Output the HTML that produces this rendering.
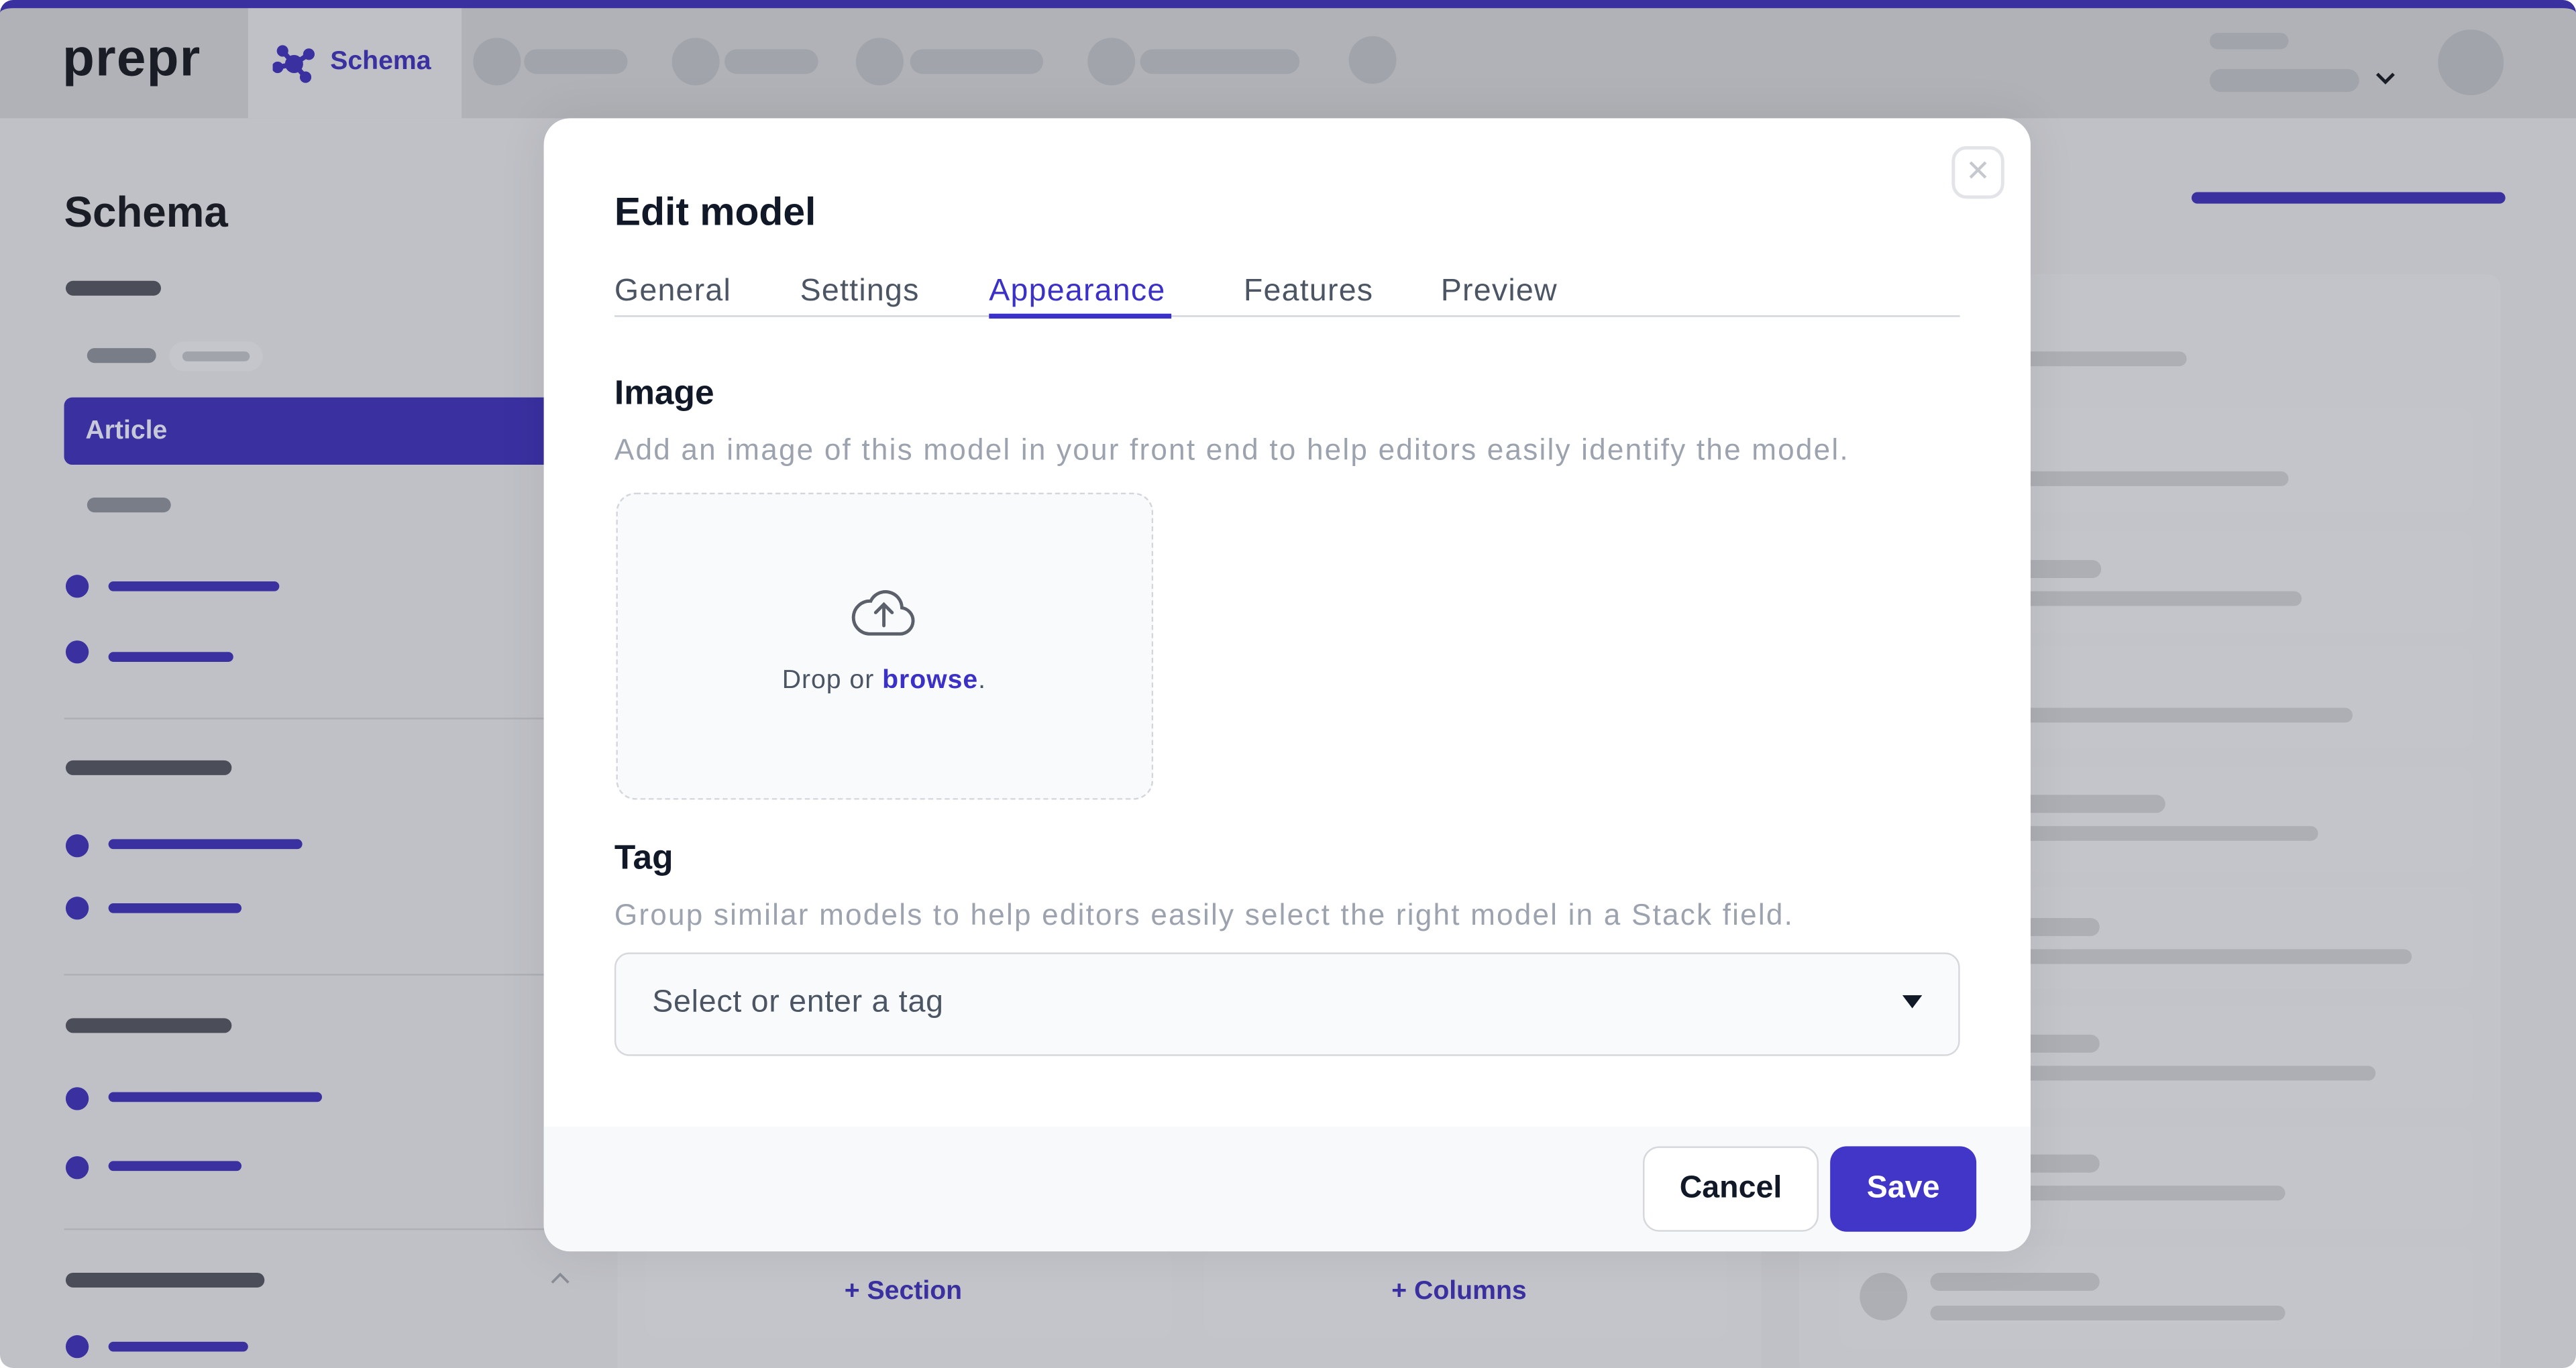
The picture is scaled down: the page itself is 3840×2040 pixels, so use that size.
<!DOCTYPE html>
<html><head><meta charset="utf-8"><style>
*{margin:0;padding:0;box-sizing:border-box}
html,body{width:3840px;height:2040px;overflow:hidden;background:#fff}
#w{position:absolute;left:0;top:0;width:1568px;height:833px;transform:scale(2.44898);transform-origin:0 0;font-family:"Liberation Sans",sans-serif}
.a{position:absolute}
.frame{left:0;top:0;width:1568px;height:833px;border-radius:8px;overflow:hidden;background:#c0c1c6;border-top:5px solid #3a30a0}
.bar{position:absolute;border-radius:6px;background:#a1a4ab}
.dk{background:#4b4e58}
.md{background:#797d87}
.pu{background:#3a30a0}
.dot{position:absolute;width:14px;height:14px;border-radius:50%;background:#3a30a0}
.card{position:absolute;background:#c4c5ca;border-radius:8px}
.g{color:#9ca3af;letter-spacing:0.9px}
.tab{position:absolute;top:95px;font-size:19px;color:#4b5563;letter-spacing:0.5px}
</style></head><body><div id="w">
<div class="a frame">
 <div class="a" style="left:0;top:0;width:1568px;height:67px;background:#b0b2b7"></div>
 <div class="a" style="left:151px;top:0;width:130px;height:67px;background:#c0c1c6"></div>
 <div class="a" style="left:38px;top:12px;font-size:32px;font-weight:bold;color:#1a1d26;letter-spacing:0.5px">prepr</div>
 <svg class="a" style="left:166px;top:22px" width="28" height="24" viewBox="0 0 28 24"><g stroke="#3a30a0" stroke-width="3" stroke-linecap="round" fill="#3a30a0"><line x1="13" y1="12" x2="6" y2="4"/><line x1="13" y1="12" x2="22" y2="6"/><line x1="13" y1="12" x2="3" y2="14"/><line x1="13" y1="12" x2="20" y2="20"/><circle cx="13" cy="12" r="4"/><circle cx="6" cy="4" r="2"/><circle cx="22" cy="6" r="2"/><circle cx="20" cy="20" r="2"/><circle cx="3" cy="14" r="2"/></g></svg>
 <div class="a" style="left:201px;top:24px;font-size:16px;font-weight:bold;color:#3a30a0">Schema</div>
 <div class="a" style="left:288px;top:18px;width:29px;height:29px;border-radius:50%;background:#a1a4ab"></div><div class="bar" style="left:319px;top:25px;width:63px;height:15px;border-radius:8px"></div>
 <div class="a" style="left:409px;top:18px;width:29px;height:29px;border-radius:50%;background:#a1a4ab"></div><div class="bar" style="left:441px;top:25px;width:57px;height:15px;border-radius:8px"></div>
 <div class="a" style="left:521px;top:18px;width:29px;height:29px;border-radius:50%;background:#a1a4ab"></div><div class="bar" style="left:554px;top:25px;width:81px;height:15px;border-radius:8px"></div>
 <div class="a" style="left:662px;top:18px;width:29px;height:29px;border-radius:50%;background:#a1a4ab"></div><div class="bar" style="left:694px;top:25px;width:97px;height:15px;border-radius:8px"></div>
 <div class="a" style="left:821px;top:17px;width:29px;height:29px;border-radius:50%;background:#a1a4ab"></div>
 <div class="bar" style="left:1345px;top:15px;width:48px;height:10px"></div>
 <div class="bar" style="left:1345px;top:37px;width:91px;height:14px;border-radius:8px"></div>
 <svg class="a" style="left:1445px;top:38px" width="14" height="10"><path d="M2 2l5 5 5-5" stroke="#1a1d26" stroke-width="2" fill="none"/></svg>
 <div class="a" style="left:1484px;top:13px;width:40px;height:40px;border-radius:50%;background:#a1a4ab"></div>
 <div class="a" style="left:39px;top:109px;font-size:26px;font-weight:bold;color:#1a1d26">Schema</div>
 <div class="bar dk" style="left:40px;top:166px;width:58px;height:9px"></div>
 <div class="bar md" style="left:53px;top:207px;width:42px;height:9px"></div>
 <div class="a" style="left:103px;top:203px;width:57px;height:18px;border-radius:9px;background:#c5c6cb"></div>
 <div class="bar" style="left:111px;top:209px;width:41px;height:6px"></div>
 <div class="a" style="left:39px;top:237px;width:300px;height:41px;border-radius:5px;background:#3a30a0;color:#c7c8d8;font-weight:bold;font-size:16px;padding:12px 13px">Article</div>
 <div class="bar md" style="left:53px;top:298px;width:51px;height:9px"></div>
 <div class="dot" style="left:40px;top:345px"></div><div class="bar pu" style="left:66px;top:349px;width:104px;height:6px"></div>
 <div class="dot" style="left:40px;top:385px"></div><div class="bar pu" style="left:66px;top:392px;width:76px;height:6px"></div>
 <div class="a" style="left:39px;top:432px;width:300px;height:1px;background:#adafb5"></div>
 <div class="bar dk" style="left:40px;top:458px;width:101px;height:9px"></div>
 <div class="dot" style="left:40px;top:503px"></div><div class="bar pu" style="left:66px;top:506px;width:118px;height:6px"></div>
 <div class="dot" style="left:40px;top:541px"></div><div class="bar pu" style="left:66px;top:545px;width:81px;height:6px"></div>
 <div class="a" style="left:39px;top:588px;width:300px;height:1px;background:#adafb5"></div>
 <div class="bar dk" style="left:40px;top:615px;width:101px;height:9px"></div>
 <div class="dot" style="left:40px;top:657px"></div><div class="bar pu" style="left:66px;top:660px;width:130px;height:6px"></div>
 <div class="dot" style="left:40px;top:699px"></div><div class="bar pu" style="left:66px;top:702px;width:81px;height:6px"></div>
 <div class="a" style="left:39px;top:743px;width:300px;height:1px;background:#adafb5"></div>
 <div class="bar dk" style="left:40px;top:770px;width:121px;height:9px"></div>
 <svg class="a" style="left:334px;top:769px" width="14" height="10"><path d="M2 7l5-5 5 5" stroke="#8a8d95" stroke-width="1.5" fill="none"/></svg>
 <div class="dot" style="left:40px;top:808px"></div><div class="bar pu" style="left:66px;top:812px;width:85px;height:6px"></div>
 <div class="a" style="left:376px;top:67px;width:696px;height:766px;background:#c3c4c9"></div>
 <div class="card" style="left:393px;top:755px;width:320px;height:55px"></div>
 <div class="card" style="left:733px;top:755px;width:318px;height:55px"></div>
 <div class="a" style="left:514px;top:773px;font-size:16px;font-weight:bold;color:#3a30a0">+ Section</div>
 <div class="a" style="left:847px;top:773px;font-size:16px;font-weight:bold;color:#3a30a0">+ Columns</div>
 <div class="bar pu" style="left:1334px;top:112px;width:191px;height:7px;border-radius:4px"></div>
 <div class="card" style="left:1095px;top:162px;width:427px;height:671px;background:#c3c4c9"></div>
 <div class="bar" style="left:1230px;top:209px;width:101px;height:9px;background:#adafb5"></div>
 <div class="card" style="left:1222px;top:243px;width:283px;height:64px"></div><div class="bar" style="left:1230px;top:282px;width:163px;height:9px;background:#adafb5"></div>
 <div class="card" style="left:1222px;top:318px;width:283px;height:62px"></div><div class="bar" style="left:1230px;top:336px;width:49px;height:11px;background:#adafb5"></div><div class="bar" style="left:1230px;top:355px;width:171px;height:9px;background:#adafb5"></div>
 <div class="card" style="left:1222px;top:389px;width:283px;height:62px"></div><div class="bar" style="left:1230px;top:426px;width:202px;height:9px;background:#adafb5"></div>
 <div class="card" style="left:1222px;top:462px;width:283px;height:64px"></div><div class="bar" style="left:1230px;top:479px;width:88px;height:11px;background:#adafb5"></div><div class="bar" style="left:1230px;top:498px;width:181px;height:9px;background:#adafb5"></div>
 <div class="card" style="left:1222px;top:535px;width:283px;height:62px"></div><div class="bar" style="left:1230px;top:554px;width:48px;height:11px;background:#adafb5"></div><div class="bar" style="left:1230px;top:573px;width:238px;height:9px;background:#adafb5"></div>
 <div class="card" style="left:1222px;top:608px;width:283px;height:62px"></div><div class="bar" style="left:1230px;top:625px;width:48px;height:11px;background:#adafb5"></div><div class="bar" style="left:1230px;top:644px;width:216px;height:9px;background:#adafb5"></div>
 <div class="card" style="left:1222px;top:681px;width:283px;height:62px"></div><div class="bar" style="left:1230px;top:698px;width:48px;height:11px;background:#adafb5"></div><div class="bar" style="left:1230px;top:717px;width:161px;height:9px;background:#adafb5"></div>
 <div class="card" style="left:1120px;top:754px;width:385px;height:62px"></div>
 <div class="a" style="left:1132px;top:770px;width:29px;height:29px;border-radius:50%;background:#adafb5"></div>
 <div class="bar" style="left:1175px;top:770px;width:103px;height:11px;background:#adafb5"></div><div class="bar" style="left:1175px;top:790px;width:216px;height:9px;background:#adafb5"></div>
</div>
<div class="a" style="left:331px;top:72px;width:905px;height:690px;background:#fff;border-radius:16px;overflow:hidden;box-shadow:0 0 30px rgba(0,0,0,.08)">
 <div class="a" style="left:0;top:614px;width:905px;height:76px;background:#f8f9fb"></div>
 <div class="a" style="left:857px;top:17px;width:32px;height:32px;border:2px solid #e2e4e8;border-radius:9px;color:#c5c8ce;font-size:18px;text-align:center;line-height:27px">✕</div>
 <div class="a" style="left:43px;top:44px;font-size:24px;font-weight:bold;color:#111827">Edit model</div>
 <div class="a" style="left:43px;top:120px;width:819px;height:1px;background:#d1d5db"></div>
 <div class="tab" style="left:43px">General</div>
 <div class="tab" style="left:156px">Settings</div>
 <div class="tab" style="left:271px;color:#3b30c8">Appearance</div>
 <div class="a" style="left:271px;top:119px;width:111px;height:3px;background:#3b30c8"></div>
 <div class="tab" style="left:426px">Features</div>
 <div class="tab" style="left:546px">Preview</div>
 <div class="a" style="left:43px;top:156px;font-size:21px;font-weight:bold;color:#111827">Image</div>
 <div class="a g" style="left:43px;top:192px;font-size:18px">Add an image of this model in your front end to help editors easily identify the model.</div>
 <div class="a" style="left:44px;top:228px;width:327px;height:187px;border:1.5px dashed #d4d6db;border-radius:12px;background:#f8fafc"></div>
 <svg class="a" style="left:186px;top:285px" width="42" height="32" viewBox="0 0 42 32"><path d="M12 29H31a8 8 0 0 0 1-15.9A10 10 0 0 0 13 9a8 8 0 0 0-1 20z" fill="none" stroke="#5b606b" stroke-width="2"/><path d="M21 24V11M16 16l5-5 5 5" fill="none" stroke="#5b606b" stroke-width="2" stroke-linecap="round"/></svg>
 <div class="a" style="left:145px;top:334px;font-size:16px;color:#4b5563;letter-spacing:0.4px">Drop or <span style="color:#3b30c8;font-weight:bold">browse</span>.</div>
 <div class="a" style="left:43px;top:439px;font-size:21px;font-weight:bold;color:#111827">Tag</div>
 <div class="a g" style="left:43px;top:475px;font-size:18px">Group similar models to help editors easily select the right model in a Stack field.</div>
 <div class="a" style="left:43px;top:508px;width:819px;height:63px;border:1.5px solid #d6d8dc;border-radius:9px;background:#f9fafb"></div>
 <div class="a" style="left:66px;top:528px;font-size:19px;color:#4b5563;letter-spacing:0.3px">Select or enter a tag</div>
 <svg class="a" style="left:826px;top:533px" width="14" height="10"><path d="M1 1h12L7 9z" fill="#111827"/></svg>
 <div class="a" style="left:669px;top:626px;width:107px;height:52px;border:1.5px solid #d6d8dc;border-radius:10px;background:#fff;font-size:19px;font-weight:bold;color:#111827;text-align:center;line-height:49px">Cancel</div>
 <div class="a" style="left:783px;top:626px;width:89px;height:52px;border-radius:10px;background:#4236c9;font-size:19px;font-weight:bold;color:#fff;text-align:center;line-height:52px">Save</div>
</div>
</div></body></html>
